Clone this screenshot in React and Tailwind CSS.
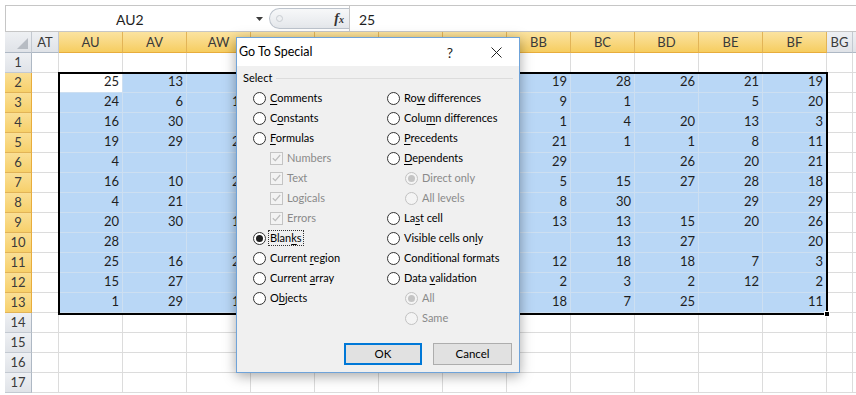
import React from "react";

const SEL_COLS = ["AU", "AV", "AW", "AX", "AY", "AZ", "BA", "BB", "BC", "BD", "BE", "BF"];

const DATA = {
  2: [25, 13, 7, null, null, null, null, 19, 28, 26, 21, 19],
  3: [24, 6, 14, null, null, null, null, 9, 1, null, 5, 20],
  4: [16, 30, 3, null, null, null, null, 1, 4, 20, 13, 3],
  5: [19, 29, 21, null, null, null, null, 21, 1, 1, 8, 11],
  6: [4, null, 8, null, null, null, null, 29, null, 26, 20, 21],
  7: [16, 10, 26, null, null, null, null, 5, 15, 27, 28, 18],
  8: [4, 21, 5, null, null, null, null, 8, 30, null, 29, 29],
  9: [20, 30, 18, null, null, null, null, 13, 13, 15, 20, 26],
  10: [28, null, 2, null, null, null, null, null, 13, 27, null, 20],
  11: [25, 16, 23, null, null, null, null, 12, 18, 18, 7, 3],
  12: [15, 27, 9, null, null, null, null, 2, 3, 2, 12, 2],
  13: [1, 29, 12, null, null, null, null, 18, 7, 25, null, 11],
};

const GRID =
  "grid grid-cols-[27px_27px_repeat(12,64px)_26px_64px] grid-rows-[21px_repeat(17,20px)]";

function HeaderCell({ label, selected }) {
  return (
    <div
      className={
        selected
          ? "flex items-center justify-center border-r border-b border-r-[#e2b457] border-b-[#e8ad3c] bg-gradient-to-b from-[#fbe3a0] to-[#f6cd5f] text-[13px] text-[#3a3a3a] pt-[1px]"
          : "flex items-center justify-center border-r border-b border-r-[#c3c9d1] border-b-[#aeb8c4] bg-gradient-to-b from-[#eef0f3] to-[#e0e3e8] text-[13px] text-[#3a3a3a] pt-[1px]"
      }
    >
      {label}
    </div>
  );
}

function RowHeader({ n, selected }) {
  return (
    <div
      className={
        selected
          ? "flex items-center justify-center border-r border-b border-r-[#e8ad3c] border-b-[#e2b457] bg-gradient-to-b from-[#fadf95] to-[#f7d06a] text-[13px] text-[#3a3a3a]"
          : "flex items-center justify-center border-r border-b border-r-[#aeb8c4] border-b-[#c3c9d1] bg-gradient-to-b from-[#eef0f3] to-[#e0e3e8] text-[13px] text-[#3a3a3a]"
      }
    >
      {n}
    </div>
  );
}

function Cell({ value, kind }) {
  const cls =
    kind === "sel"
      ? "flex items-center justify-end pr-[3px] pb-[1px] border-r border-b border-[#cddff1] bg-[#b9d7f6] text-[13px] text-[#1e1e1e]"
      : kind === "active"
      ? "flex items-center justify-end pr-[3px] pb-[1px] border-r border-b border-[#cddff1] bg-white text-[13px] text-[#1e1e1e]"
      : "flex items-center justify-end pr-[3px] pb-[1px] border-r border-b border-[#dcdcdc] bg-white text-[13px] text-[#1e1e1e]";
  return <div className={cls}>{value ?? ""}</div>;
}

function Sheet() {
  const cells = [];
  cells.push(
    <div
      key="corner"
      className="relative border-r border-b border-r-[#c3c9d1] border-b-[#aeb8c4] bg-gradient-to-b from-[#eef0f3] to-[#e0e3e8]"
    >
      <svg className="absolute right-[3px] bottom-[3px]" width="11" height="11" viewBox="0 0 11 11">
        <polygon points="11,0 11,11 0,11" fill="#b7bcc3" />
      </svg>
    </div>
  );
  cells.push(<HeaderCell key="h-AT" label="AT" />);
  SEL_COLS.forEach((c) => cells.push(<HeaderCell key={"h-" + c} label={c} selected />));
  cells.push(<HeaderCell key="h-BG" label="BG" />);
  cells.push(<HeaderCell key="h-BH" label="" />);

  for (let r = 1; r <= 17; r++) {
    const sel = r >= 2 && r <= 13;
    cells.push(<RowHeader key={"r" + r} n={r} selected={sel} />);
    cells.push(<Cell key={"AT" + r} />);
    SEL_COLS.forEach((c, i) => {
      const v = sel ? DATA[r][i] : null;
      const kind = sel ? (r === 2 && i === 0 ? "active" : "sel") : "plain";
      cells.push(<Cell key={c + r} value={v} kind={kind} />);
    });
    cells.push(<Cell key={"BG" + r} />);
    cells.push(<Cell key={"BH" + r} />);
  }

  return (
    <div className="grid">
      <div className={GRID + " col-start-1 row-start-1"}>{cells}</div>
      <div className={GRID + " col-start-1 row-start-1 pointer-events-none"}>
        <div className="col-start-3 col-end-15 row-start-3 row-end-15 m-[-1px] mb-[-2px] border-2 border-black relative">
          <div className="absolute right-[-4px] bottom-[-4px] w-[6px] h-[6px] bg-black border border-white" />
        </div>
      </div>
    </div>
  );
}

function FormulaBar() {
  return (
    <div className="flex h-[27px] border-t border-b border-l border-[#c6c6c6] text-[14px] text-[#1e1e1e] bg-white">
      <div className="flex items-center w-[263px] shrink-0">
        <span className="ml-[110px] pt-[2px]">AU2</span>
        <svg className="ml-auto mr-[6px]" width="7" height="4" viewBox="0 0 7 4">
          <polygon points="0,0 7,0 3.5,4" fill="#3c3c3c" />
        </svg>
      </div>
      <div className="self-center flex items-center w-[80px] h-[21px] rounded-l-full border-l border-y border-[#bcc3cc] bg-gradient-to-b from-[#f7f8f9] to-[#e4e7eb] shrink-0">
        <span className="ml-[6px] w-[7px] h-[7px] rounded-full border border-[#c9cdd2] bg-[#eef0f2]" />
        <span className="ml-auto mr-[5px] font-['Liberation_Serif',serif] italic font-bold text-[14px] text-[#333] leading-none">
          f<span className="text-[10px]">x</span>
        </span>
      </div>
      <div className="flex items-center border-l border-[#c6c6c6] pl-[9px] pt-[2px] flex-1">25</div>
    </div>
  );
}

function Radio({ checked, disabled }) {
  return (
    <span
      className={
        disabled
          ? "w-[13px] h-[13px] rounded-full border border-[#c2c2c2] bg-[#f4f4f4] flex items-center justify-center shrink-0"
          : "w-[13px] h-[13px] rounded-full border border-[#333333] bg-white flex items-center justify-center shrink-0"
      }
    >
      {checked && (
        <span
          className={
            disabled
              ? "w-[7px] h-[7px] rounded-full bg-[#c4c4c4]"
              : "w-[7px] h-[7px] rounded-full bg-[#1f1f1f]"
          }
        />
      )}
    </span>
  );
}

function Check() {
  return (
    <span className="w-[13px] h-[13px] border border-[#c4c4c4] bg-[#f3f3f3] flex items-center justify-center shrink-0">
      <svg width="9" height="8" viewBox="0 0 9 8">
        <polyline points="0.8,4.2 3.3,6.6 8.2,1" fill="none" stroke="#bdbdbd" strokeWidth="1.2" />
      </svg>
    </span>
  );
}

function Label({ text, u, disabled }) {
  if (u == null || disabled) return <span>{text}</span>;
  return (
    <span>
      {text.slice(0, u)}
      <span className="underline underline-offset-2">{text[u]}</span>
      {text.slice(u + 1)}
    </span>
  );
}

function Opt({ type = "radio", text, u, checked, disabled, indent, focus }) {
  return (
    <div
      className={
        indent === "cb"
          ? "flex items-center h-[20px] gap-[4px] ml-[17px]"
          : indent === "r"
          ? "flex items-center h-[20px] gap-[4px] ml-[18px]"
          : "flex items-center h-[20px] gap-[4px]"
      }
    >
      {type === "check" ? <Check /> : <Radio checked={checked} disabled={disabled} />}
      <span
        className={
          focus
            ? "outline outline-1 outline-dotted outline-[#333] px-[1px] ml-[-1px] leading-[14px] text-black"
            : disabled
            ? "text-[#8a8a8a]"
            : "text-black"
        }
      >
        <Label text={text} u={u} disabled={disabled} />
      </span>
    </div>
  );
}

function Dialog() {
  return (
    <div className="absolute left-[236px] top-[37px] w-[284px] border border-[#6fa3d9] bg-[#f0f0f0] shadow-[0_3px_12px_rgba(0,0,0,0.35)] font-[Lato,sans-serif] text-[11px]">
      <div className="flex items-center h-[28px] bg-white">
        <span className="pl-[2px] text-[12.5px] text-black">Go To Special</span>
        <span className="ml-auto w-[46px] text-center text-[14px] text-[#222]">?</span>
        <span className="w-[46px] flex items-center justify-center">
          <svg width="11" height="11" viewBox="0 0 11 11">
            <path d="M0.5 0.5 L10.5 10.5 M10.5 0.5 L0.5 10.5" stroke="#222" strokeWidth="1" />
          </svg>
        </span>
      </div>
      <div className="flex items-center h-[16px] mt-[4px] pl-[6px] pr-[6px] gap-[4px]">
        <span className="text-black">Select</span>
        <span className="flex-1 border-t border-[#dcdcdc] mt-[1px]" />
      </div>
      <div className="flex mt-[2px]">
        <div className="w-[150px] pl-[16px] flex flex-col">
          <Opt text="Comments" u={0} />
          <Opt text="Constants" u={1} />
          <Opt text="Formulas" u={0} />
          <Opt type="check" indent="cb" text="Numbers" disabled />
          <Opt type="check" indent="cb" text="Text" disabled />
          <Opt type="check" indent="cb" text="Logicals" disabled />
          <Opt type="check" indent="cb" text="Errors" disabled />
          <Opt text="Blanks" u={4} checked focus />
          <Opt text="Current region" u={8} />
          <Opt text="Current array" u={8} />
          <Opt text="Objects" u={1} />
        </div>
        <div className="flex flex-col">
          <Opt text="Row differences" u={2} />
          <Opt text="Column differences" u={4} />
          <Opt text="Precedents" u={0} />
          <Opt text="Dependents" u={0} />
          <Opt indent="r" text="Direct only" checked disabled />
          <Opt indent="r" text="All levels" disabled />
          <Opt text="Last cell" u={2} />
          <Opt text="Visible cells only" u={16} />
          <Opt text="Conditional formats" u={6} />
          <Opt text="Data validation" u={5} />
          <Opt indent="r" text="All" checked disabled />
          <Opt indent="r" text="Same" disabled />
        </div>
      </div>
      <div className="flex justify-end gap-[11px] mt-[15px] pr-[7px] pb-[7px] text-[11.5px]">
        <div className="w-[78px] h-[22px] border-2 border-[#0078d7] bg-[#e1e1e1] flex items-center justify-center text-black">
          OK
        </div>
        <div className="w-[79px] h-[22px] border border-[#adadad] bg-[#e1e1e1] flex items-center justify-center text-black">
          Cancel
        </div>
      </div>
    </div>
  );
}

export default function App() {
  return (
    <div className="relative w-[856px] h-[395px] overflow-hidden bg-white font-[Lato,sans-serif]">
      <div className="pt-[5px] pl-[5px]">
        <FormulaBar />
        <Sheet />
      </div>
      <Dialog />
    </div>
  );
}
